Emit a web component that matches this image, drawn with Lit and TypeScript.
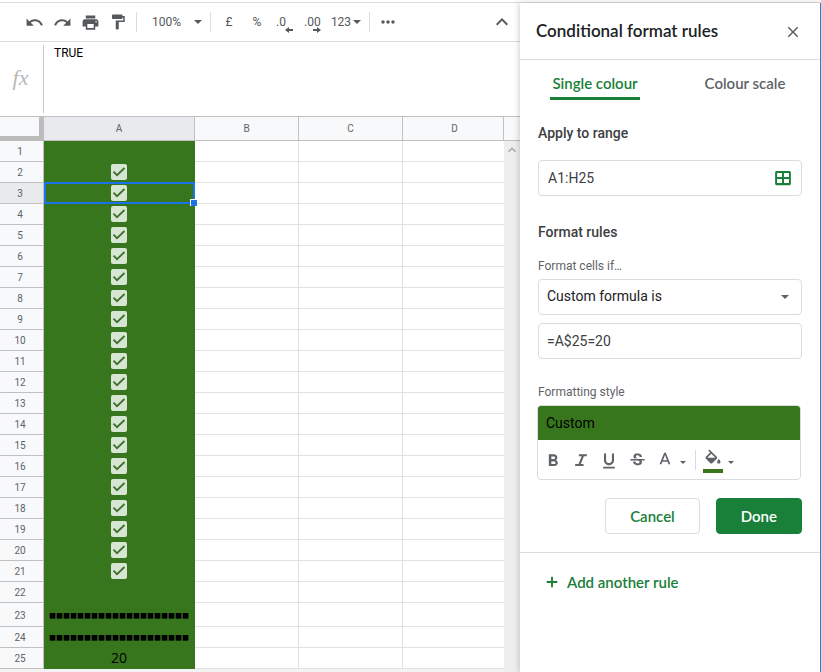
import { LitElement, html, svg, css, nothing } from "lit";
import { customElement, property, state } from "lit/decorators.js";
import { classMap } from "lit/directives/class-map.js";

const ICONS: Record<string, string> = {
  undo: "M12.5 8c-2.65 0-5.05.99-6.9 2.6L2 7v9h9l-3.62-3.62c1.39-1.16 3.16-1.88 5.12-1.88 3.54 0 6.55 2.31 7.6 5.5l2.37-.78C21.08 11.03 17.15 8 12.5 8z",
  redo: "M18.4 10.6C16.55 8.99 14.15 8 11.5 8c-4.65 0-8.58 3.03-9.96 7.22L3.9 16c1.05-3.19 4.05-5.5 7.6-5.5 1.95 0 3.73.72 5.12 1.88L13 16h9V7l-3.6 3.6z",
  print: "M19 8H5c-1.66 0-3 1.34-3 3v6h4v4h12v-4h4v-6c0-1.66-1.34-3-3-3zm-3 11H8v-5h8v5zm3-7c-.55 0-1-.45-1-1s.45-1 1-1 1 .45 1 1-.45 1-1 1zm-1-9H6v4h12V3z",
  paint: "M18 4V3c0-.55-.45-1-1-1H5c-.55 0-1 .45-1 1v4c0 .55.45 1 1 1h12c.55 0 1-.45 1-1V6h1v4H9v11c0 .55.45 1 1 1h2c.55 0 1-.45 1-1v-9h8V4h-3z",
  more: "M6 10c-1.1 0-2 .9-2 2s.9 2 2 2 2-.9 2-2-.9-2-2-2zm12 0c-1.1 0-2 .9-2 2s.9 2 2 2 2-.9 2-2-.9-2-2-2zm-6 0c-1.1 0-2 .9-2 2s.9 2 2 2 2-.9 2-2-.9-2-2-2z",
  up: "M12 8l-6 6 1.41 1.41L12 10.83l4.59 4.58L18 14z",
  close: "M19 6.41L17.59 5 12 10.59 6.41 5 5 6.41 10.59 12 5 17.59 6.41 19 12 13.41 17.59 19 19 17.59 13.41 12z",
  range: "M20.500 2.500H3.500c-1.100 0-2 .9-2 2v15c0 1.100.9 2 2 2h17c1.100 0 2-.9 2-2v-15c0-1.100-.9-2-2-2zm-.6 8.200h-6.600V5.200h6.600v5.500zM10.700 5.200v5.500H4.100V5.200h6.600zM4.100 13.300h6.600v5.500H4.100v-5.500zm9.200 5.500v-5.500h6.600v5.500h-6.600z",
  bold: "M15.6 10.79c.97-.67 1.65-1.77 1.65-2.79 0-2.26-1.75-4-4-4H7v14h7.04c2.09 0 3.71-1.7 3.71-3.79 0-1.52-.86-2.82-2.15-3.42zM10 6.500h3c.83 0 1.500.67 1.500 1.500s-.67 1.500-1.500 1.500h-3v-3zm3.500 9H10v-3h3.500c.83 0 1.500.67 1.500 1.500s-.67 1.500-1.500 1.500z",
  italic: "M9.500 4v2.400h3.300l-3.800 9.200H5V18h10v-2.400h-3.300l3.800-9.200H19V4z",
  underline: "M12 17c3.31 0 6-2.69 6-6V3h-2.500v8c0 1.93-1.57 3.500-3.500 3.500S8.500 12.930 8.500 11V3H6v8c0 3.310 2.690 6 6 6zm-7 2v2h14v-2H5z",
  strike: "M7.24 8.75c-.26-.48-.39-1.03-.39-1.67 0-.61.13-1.16.4-1.67.26-.5.63-.93 1.11-1.29.48-.35 1.05-.63 1.7-.83.66-.19 1.39-.29 2.18-.29.81 0 1.54.11 2.21.34.66.22 1.23.54 1.69.94.47.4.83.88 1.08 1.43.25.55.38 1.15.38 1.81h-3.01c0-.31-.05-.59-.15-.85-.09-.27-.24-.49-.44-.68-.2-.19-.45-.33-.75-.44-.3-.1-.66-.16-1.06-.16-.39 0-.74.04-1.03.13-.29.09-.53.21-.72.36-.19.16-.34.34-.44.55-.1.21-.15.43-.15.66 0 .48.25.88.74 1.21.38.25.77.48 1.41.7H7.39c-.05-.08-.11-.17-.15-.25zM21 12v-2H3v2h9.62c.18.07.4.14.55.2.37.17.66.34.87.51.21.17.35.36.43.57.07.2.11.43.11.69 0 .23-.05.45-.14.66-.09.2-.23.38-.42.53-.19.15-.42.26-.71.35-.29.08-.63.13-1.01.13-.43 0-.83-.04-1.18-.13s-.66-.23-.91-.42c-.25-.19-.45-.44-.59-.75-.14-.31-.25-.76-.25-1.21H6.4c0 .55.08 1.13.24 1.58.16.45.37.85.65 1.21.28.35.6.66.98.92.37.26.78.48 1.22.65.44.17.9.3 1.38.39.48.08.96.13 1.44.13.8 0 1.53-.09 2.18-.28s1.21-.45 1.67-.79c.46-.34.82-.77 1.07-1.27s.38-1.07.38-1.71c0-.6-.1-1.14-.31-1.61-.05-.11-.11-.23-.17-.33H21z",
  color: "M11 2L5.500 16h2.250l1.120-3h6.250l1.120 3h2.250L13 2h-2zm-1.380 9L12 4.670 14.380 11H9.620z",
  fill: "M16.560 9.440L7.620 .500 6.210 1.910l2.380 2.380-5.150 5.150c-.59.59-.59 1.540 0 2.120l5.500 5.500c.29.29.68.44 1.060.44s.77-.15 1.060-.44l5.500-5.500c.59-.58.59-1.530 0-2.120zM5.210 10.500L10 5.710l4.790 4.790H5.210zM19 12s-2 2.170-2 3.500c0 1.100.9 2 2 2s2-.9 2-2c0-1.330-2-3.500-2-3.500z",
  plus: "M20 13.400h-6.600V20h-2.800v-6.600H4v-2.800h6.600V4h2.800v6.600H20z",
  left: "M0 3l4-3v2h4v2H4v2z",
  right: "M8 3L4 0v2H0v2h4v2z",
};

const icon = (name: string, size = 18) => html`
  <svg width=${size} height=${size} viewBox="0 0 24 24" fill="currentColor" aria-hidden="true">
    ${svg`<path d=${ICONS[name]} />`}
  </svg>`;

const arrow = (name: string) => html`
  <svg class="decimal-arrow" width="8" height="6" viewBox="0 0 8 6" fill="currentColor" aria-hidden="true">
    ${svg`<path d=${ICONS[name]} />`}
  </svg>`;

const base = css`
  :host {
    display: block;
    font-family: Roboto, "Liberation Sans", sans-serif;
    color: #3c4043;
  }
  *,
  *::before,
  *::after {
    box-sizing: border-box;
  }
  button,
  input,
  select,
  textarea {
    font: inherit;
    color: inherit;
    margin: 0;
    padding: 0;
    border: 0;
    background: none;
    outline: none;
  }
  svg {
    display: block;
    flex: none;
  }
  .caret {
    flex: none;
    border: 4px solid transparent;
    border-top-color: currentColor;
    border-bottom: 0;
  }
`;

@customElement("sheet-toolbar")
class SheetToolbar extends LitElement {
  static styles = [
    base,
    css`
      .bar {
        display: flex;
        align-items: center;
        height: 39px;
        padding: 0 4px 0 20px;
        border-bottom: 1px solid #dadce0;
        color: #55585c;
        font-size: 12px;
        line-height: 16px;
      }
      button {
        display: flex;
        align-items: center;
        justify-content: center;
        width: 28px;
        height: 28px;
        position: relative;
      }
      .sep {
        width: 1px;
        height: 20px;
        margin: 0 4px;
        background: #dadce0;
      }
      .zoom {
        width: 65px;
        justify-content: space-between;
        padding: 0 4px 0 11px;
      }
      .decimal {
        justify-content: flex-start;
        padding-left: 5px;
      }
      .format {
        width: 38px;
        gap: 2px;
      }
      .decimal-arrow {
        position: absolute;
        right: 6px;
        bottom: 3px;
      }
      .end {
        margin-left: auto;
      }
    `,
  ];
  render() {
    return html`<div class="bar" role="toolbar" aria-label="Main">
      <button aria-label="Undo">${icon("undo", 19)}</button>
      <button aria-label="Redo">${icon("redo", 19)}</button>
      <button aria-label="Print">${icon("print", 19)}</button>
      <button aria-label="Paint format">${icon("paint", 18)}</button>
      <span class="sep"></span>
      <button class="zoom" aria-label="Zoom">100%<span class="caret"></span></button>
      <span class="sep"></span>
      <button aria-label="Format as currency">£</button>
      <button aria-label="Format as percent">%</button>
      <button class="decimal" aria-label="Decrease decimal places">.0 ${arrow("left")}</button>
      <button class="decimal" aria-label="Increase decimal places">.00 ${arrow("right")}</button>
      <button class="format" aria-label="More formats">123<span class="caret"></span></button>
      <span class="sep"></span>
      <button aria-label="More">${icon("more", 20)}</button>
      <button class="end" aria-label="Hide the menus">${icon("up", 24)}</button>
    </div>`;
  }
}

interface Row {
  n: number;
  kind: "blank" | "check" | "bar" | "total";
}

const ROWS: Row[] = Array.from({ length: 25 }, (_, i) => {
  const n = i + 1;
  if (n === 25) return { n, kind: "total" };
  if (n >= 23) return { n, kind: "bar" };
  return { n, kind: n === 1 || n === 22 ? "blank" : "check" };
});

@customElement("sheet-grid")
class SheetGrid extends LitElement {
  @property({ type: Number }) selected = 3;

  static styles = [
    base,
    css`
      :host {
        display: flex;
        flex: 1;
      }
      table {
        flex: 1;
        min-width: 0;
        align-self: flex-start;
        table-layout: fixed;
        border-collapse: separate;
        border-spacing: 0;
        background: #fff;
      }
      .c-num {
        width: 44px;
      }
      .c-a {
        width: 151px;
      }
      .c-mid {
        width: 104px;
      }
      th {
        padding: 0;
        background: #f8f9fa;
        color: #5f6368;
        font-size: 10px;
        line-height: 16px;
        font-weight: 400;
        border: 0 solid #c0c0c0;
        border-width: 0 1px 1px 0;
      }
      thead th {
        height: 24px;
      }
      thead th:last-child {
        padding-left: 3px;
      }
      tbody th {
        padding: 2px 3px 0 0;
      }
      thead .corner {
        border-width: 0 5px 5px 0;
        border-color: #bcbcbc;
      }
      th.on {
        background: #e8eaed;
      }
      td {
        height: 21px;
        padding: 0;
        text-align: center;
        border: 0 solid #e1e1e1;
        border-width: 0 1px 1px 0;
        font-size: 14px;
        line-height: 16px;
      }
      td:last-child {
        border-right: 0;
      }
      .tall td {
        height: 24px;
      }
      td.a {
        position: relative;
        background: #38761d;
        border-color: #38761d;
        color: #000;
      }
      .selected::before {
        content: "";
        position: absolute;
        inset: -1px -1px -1px 0;
        border: 2px solid #1a73e8;
      }
      .selected::after {
        content: "";
        position: absolute;
        right: -3px;
        bottom: -3px;
        width: 7px;
        height: 7px;
        background: #1a73e8;
        border: 1px solid #fff;
        border-width: 1px 0 0 1px;
        z-index: 1;
      }
      .check {
        display: inline-grid;
        vertical-align: top;
      }
      .check input,
      .check svg {
        grid-area: 1 / 1;
        width: 16px;
        height: 16px;
      }
      .check input {
        appearance: none;
        border-radius: 2px;
        background: #d7e6d2;
      }
      .check svg {
        pointer-events: none;
        visibility: hidden;
      }
      .check input:checked + svg {
        visibility: visible;
      }
      .blocks {
        display: block;
        font-family: "Noto Sans CJK JP", sans-serif;
        font-size: 7px;
        font-weight: 700;
        line-height: 16px;
      }
      .total {
        display: block;
        font-family: "Open Sans", sans-serif;
      }
      .scroll {
        width: 16px;
        background: #eee;
      }
      .scroll-head {
        height: 24px;
        background: #f8f9fa;
        border-bottom: 1px solid #c0c0c0;
      }
      .scroll button {
        display: block;
        width: 16px;
        height: 18px;
        color: #a8a8a8;
      }
    `,
  ];

  private cell(row: Row) {
    switch (row.kind) {
      case "check":
        return html`<label class="check"
          ><input type="checkbox" checked aria-label=${`A${row.n}`} /><svg viewBox="0 0 16 16" fill="none">
            <path d="M2.500 7.700l3.500 3.500L13.500 4" stroke="#3f6f2c" stroke-width="1.800" /></svg
        ></label>`;
      case "bar":
        return html`<span class="blocks">${"■".repeat(20)}</span>`;
      case "total":
        return html`<span class="total">20</span>`;
      default:
        return nothing;
    }
  }

  render() {
    return html`
      <table>
        <colgroup>
          <col class="c-num" />
          <col class="c-a" />
          <col class="c-mid" />
          <col class="c-mid" />
          <col />
        </colgroup>
        <thead>
          <tr>
            <th class="corner" aria-label="Select all"></th>
            <th class="on" scope="col">A</th>
            <th scope="col">B</th>
            <th scope="col">C</th>
            <th scope="col">D</th>
          </tr>
        </thead>
        <tbody>
          ${ROWS.map(
            (row) => html`<tr class=${classMap({ tall: row.n === 23 })}>
              <th scope="row" class=${classMap({ on: row.n === this.selected })}>${row.n}</th>
              <td class=${classMap({ a: true, selected: row.n === this.selected })}>${this.cell(row)}</td>
              <td></td>
              <td></td>
              <td></td>
            </tr>`,
          )}
        </tbody>
      </table>
      <div class="scroll">
        <div class="scroll-head"></div>
        <button aria-label="Scroll up">${icon("up", 16)}</button>
      </div>
    `;
  }
}

@customElement("format-panel")
class FormatPanel extends LitElement {
  @state() private tab = "Single colour";

  static styles = [
    base,
    css`
      :host {
        background: #fff;
        border-right: 1px solid #1a83d8;
        box-shadow: -1px 0 6px rgba(60, 64, 67, 0.25);
        font-size: 14px;
        line-height: 20px;
      }
      header {
        display: flex;
        align-items: center;
        justify-content: space-between;
        height: 57px;
        padding: 2px 18px 0 16px;
        border-bottom: 1px solid #dadce0;
      }
      h2,
      h3 {
        margin: 0;
        font-weight: 500;
      }
      h2,
      .tab,
      .action {
        font-family: Lato, Roboto, sans-serif;
        font-weight: 600;
        font-size: 15px;
        line-height: 20px;
      }
      h2 {
        padding-bottom: 2px;
        font-size: 17px;
        line-height: 24px;
        color: #202124;
      }
      .close {
        color: #5f6368;
      }
      .tabs {
        display: grid;
        grid-template-columns: 1fr 1fr;
        justify-items: center;
        padding-top: 9px;
      }
      .tab {
        height: 31px;
        padding: 0 2px;
        color: #5f6368;
        border-bottom: 3px solid transparent;
      }
      .tab.on {
        color: #188038;
        border-color: #188038;
      }
      form {
        padding: 23px 18px 18px;
      }
      h3 {
        font-size: 14px;
        line-height: 20px;
      }
      .field {
        display: flex;
        align-items: center;
        height: 36px;
        padding: 0 9px;
        border: 1px solid #dadce0;
        border-radius: 4px;
      }
      .field input,
      .field select {
        flex: 1;
        min-width: 0;
        height: 34px;
        appearance: none;
      }
      .condition,
      .formula {
        padding: 0 8px;
      }
      .field select {
        padding-bottom: 2px;
        color: #202124;
      }
      .field .caret {
        margin-right: 4px;
        color: #5f6368;
        pointer-events: none;
      }
      .range {
        margin: 17px 0 26px;
      }
      .range button {
        color: #188038;
      }
      .label {
        display: block;
        font-size: 12px;
        line-height: 16px;
        color: #5f6368;
      }
      .label-cond {
        margin: 16px 0 5px;
      }
      .formula {
        margin: 8px 0 25px;
      }
      .style {
        margin: 5px 1px 0 -1px;
        border: 1px solid #dadce0;
        border-radius: 4px;
        overflow: hidden;
      }
      .sample {
        display: block;
        width: 100%;
        height: 34px;
        padding: 0 8px;
        text-align: left;
        background: #38761d;
        color: #000;
      }
      .tools {
        display: flex;
        align-items: center;
        height: 39px;
        padding: 2px 1px 0;
        color: #5f6368;
      }
      .tools button {
        display: flex;
        align-items: center;
        justify-content: center;
        width: 28px;
        height: 28px;
      }
      .tools .drop {
        width: 40px;
        gap: 5px;
        justify-content: flex-start;
        padding-left: 4px;
      }
      .tools .caret {
        margin-top: 3px;
        border-width: 3px;
        border-bottom: 0;
      }
      .sep {
        width: 1px;
        height: 20px;
        margin: 0 3px 2px 4px;
        background: #dadce0;
      }
      .swatch {
        border-bottom: 4px solid #38761d;
      }
      .actions {
        display: flex;
        justify-content: flex-end;
        gap: 16px;
        margin-top: 18px;
      }
      .action {
        height: 36px;
        padding: 0 24px;
        border: 1px solid #dadce0;
        border-radius: 4px;
        color: #188038;
      }
      .primary {
        background: #188038;
        border-color: #188038;
        color: #fff;
      }
      footer {
        padding: 11px 16px;
        border-top: 1px solid #dadce0;
      }
      .add {
        display: flex;
        align-items: center;
        gap: 7px;
        padding: 0 8px;
        border: 0;
      }
    `,
  ];

  render() {
    return html`
      <header>
        <h2>Conditional format rules</h2>
        <button class="close" aria-label="Close">${icon("close", 18)}</button>
      </header>
      <div class="tabs" role="tablist">
        ${["Single colour", "Colour scale"].map(
          (t) => html`<button
            role="tab"
            class=${classMap({ tab: true, on: t === this.tab })}
            aria-selected=${t === this.tab}
            @click=${() => (this.tab = t)}
          >
            ${t}
          </button>`,
        )}
      </div>
      <form @submit=${(e: Event) => e.preventDefault()}>
        <h3><label for="range">Apply to range</label></h3>
        <div class="field range">
          <input id="range" type="text" value="A1:H25" />
          <button type="button" aria-label="Select data range">${icon("range", 18)}</button>
        </div>
        <h3>Format rules</h3>
        <label class="label label-cond" for="cond">Format cells if…</label>
        <div class="field condition">
          <select id="cond">
            <option>Custom formula is</option>
          </select>
          <span class="caret"></span>
        </div>
        <div class="field formula"><input type="text" aria-label="Value or formula" value="=A$25=20" /></div>
        <span class="label">Formatting style</span>
        <div class="style">
          <button type="button" class="sample">Custom</button>
          <div class="tools">
            <button type="button" aria-label="Bold">${icon("bold", 20)}</button>
            <button type="button" aria-label="Italic">${icon("italic", 20)}</button>
            <button type="button" aria-label="Underline">${icon("underline", 20)}</button>
            <button type="button" aria-label="Strikethrough">${icon("strike", 19)}</button>
            <button type="button" class="drop" aria-label="Text colour">
              ${icon("color", 20)}<span class="caret"></span>
            </button>
            <span class="sep"></span>
            <button type="button" class="drop" aria-label="Fill colour">
              <span class="swatch">${icon("fill", 20)}</span><span class="caret"></span>
            </button>
          </div>
        </div>
        <div class="actions">
          <button type="button" class="action">Cancel</button>
          <button type="submit" class="action primary">Done</button>
        </div>
      </form>
      <footer>
        <button type="button" class="action add">${icon("plus", 16)}Add another rule</button>
      </footer>
    `;
  }
}

@customElement("app-root")
class AppRoot extends LitElement {
  static styles = [
    base,
    css`
      :host {
        display: flex;
        flex-direction: column;
        min-height: 100vh;
        background: #fff;
      }
      .top {
        height: 3px;
        border-bottom: 1px solid #dadce0;
      }
      .page {
        flex: 1;
        display: grid;
        grid-template-columns: 1fr 301px;
      }
      .sheet {
        display: flex;
        flex-direction: column;
        min-width: 0;
      }
      .formula {
        display: flex;
        height: 75px;
        padding: 3px 0;
        border-bottom: 1px solid #c0c0c0;
      }
      .fx {
        display: grid;
        place-items: center;
        width: 44px;
        border-right: 1px solid #c8c8c8;
        padding: 0 2px 2px 0;
        font: italic 22px/24px "Liberation Serif", serif;
        color: #b8b8b8;
      }
      textarea {
        flex: 1;
        min-width: 0;
        resize: none;
        padding: 0 10px;
        font-size: 12px;
        line-height: 16px;
        color: #000;
      }
      sheet-grid {
        background: #f3f3f3;
      }
      format-panel {
        position: relative;
        z-index: 1;
      }
    `,
  ];
  render() {
    return html`
      <div class="top"></div>
      <div class="page">
        <main class="sheet">
          <sheet-toolbar></sheet-toolbar>
          <div class="formula">
            <label class="fx" for="fx">fx</label>
            <textarea id="fx" .value=${"TRUE"}></textarea>
          </div>
          <sheet-grid></sheet-grid>
        </main>
        <format-panel></format-panel>
      </div>
    `;
  }
}
